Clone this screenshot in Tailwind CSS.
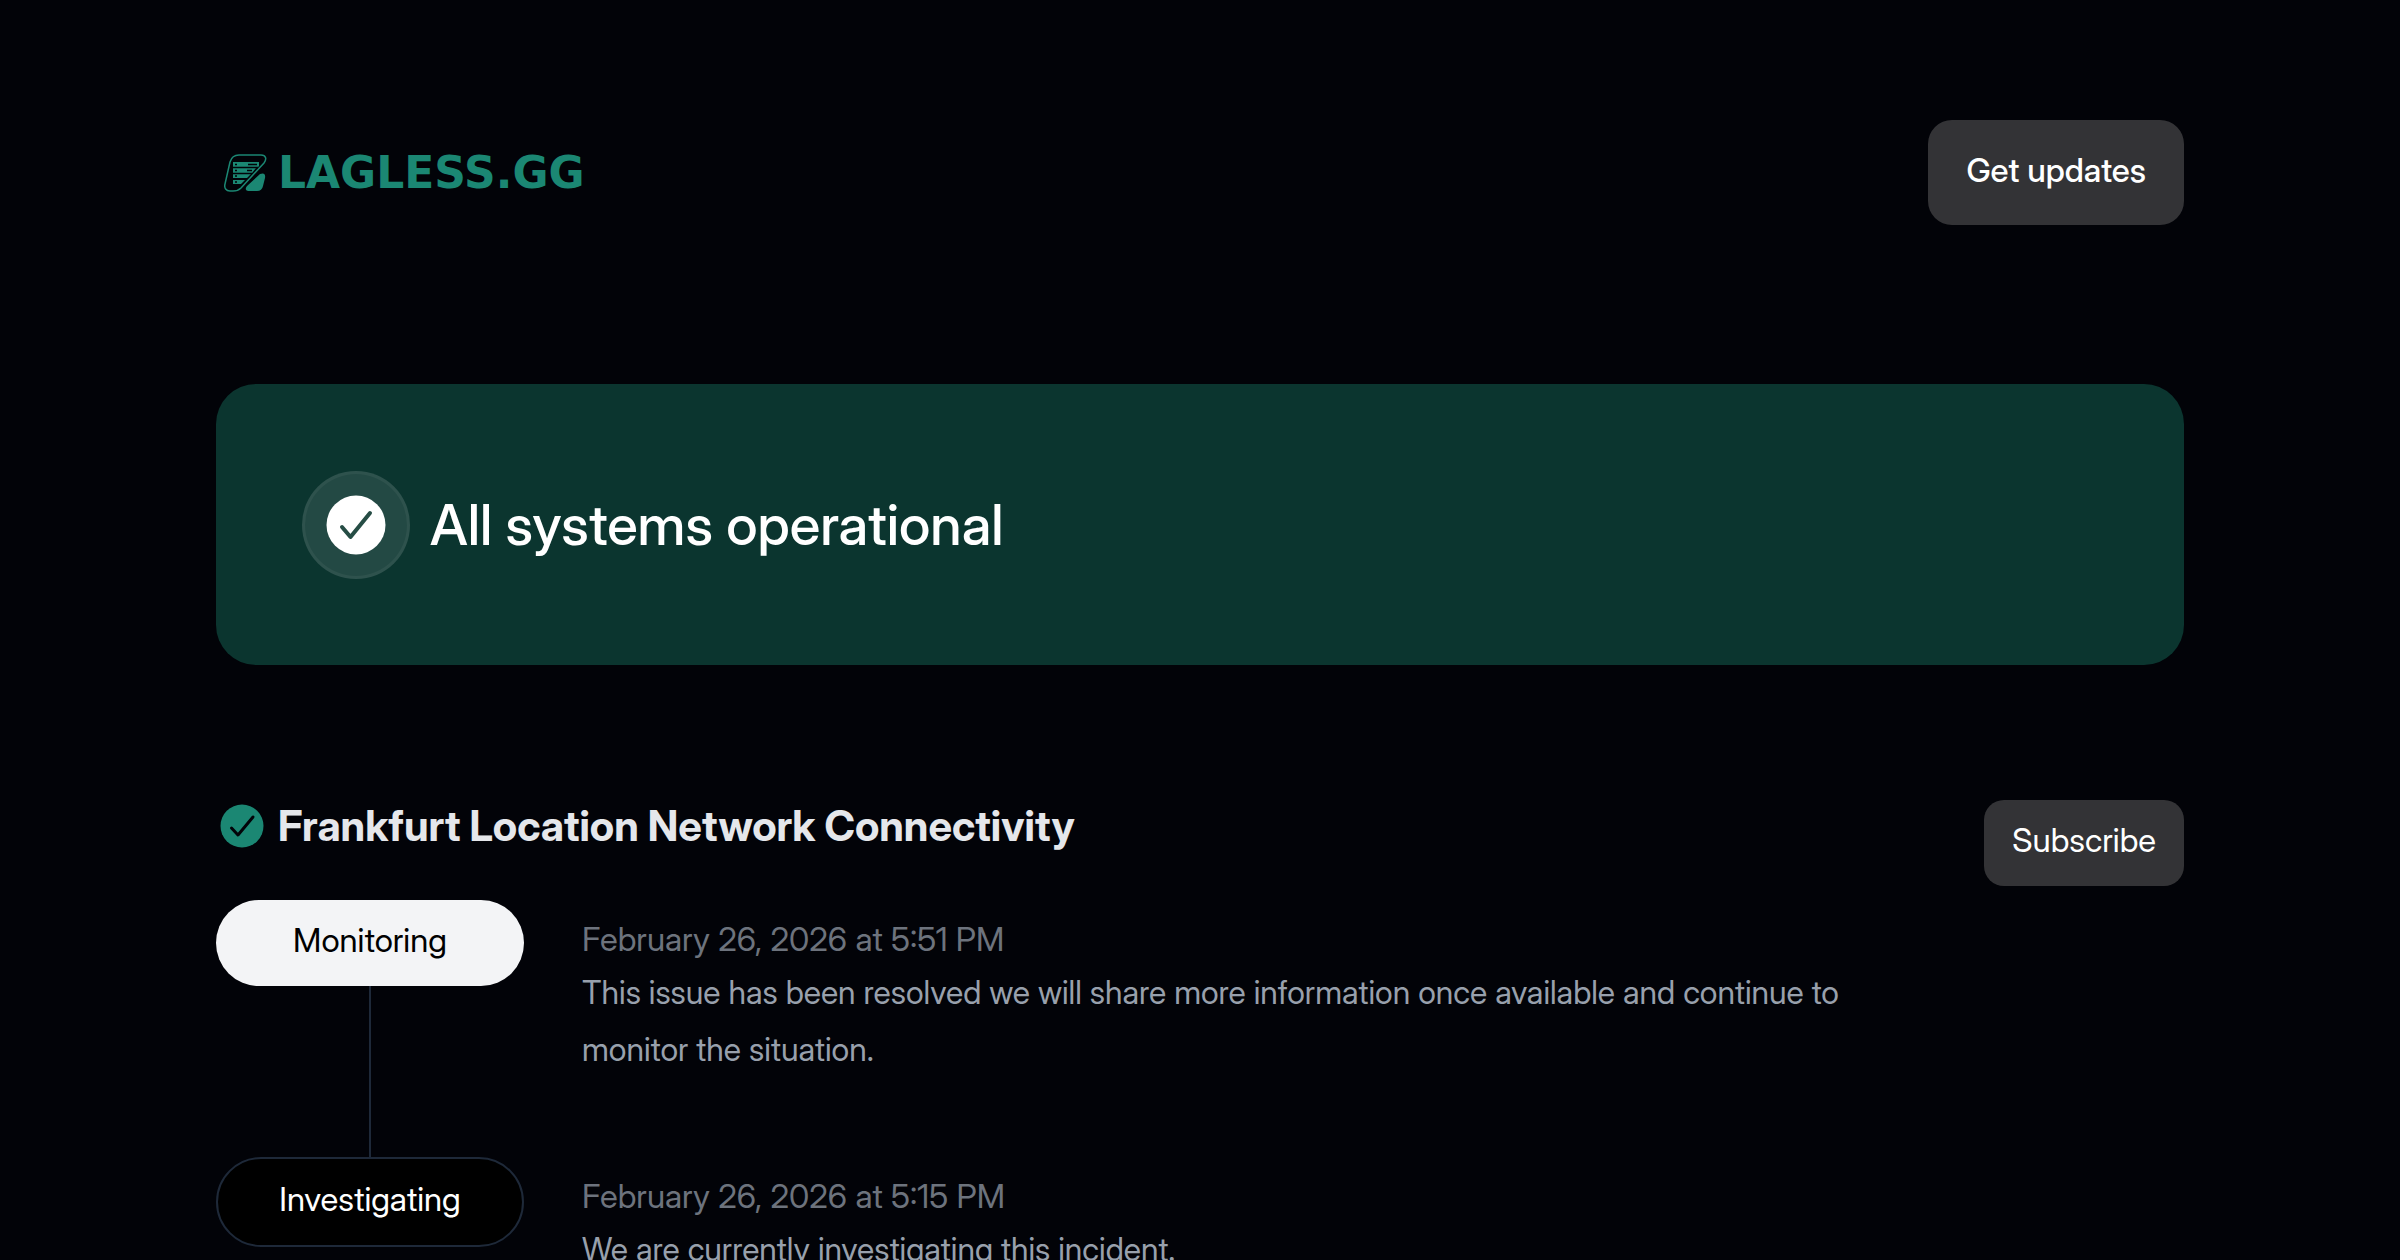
<!DOCTYPE html>
<html lang="en">
<head>
    <meta charset="UTF-8">
    <meta name="viewport" content="width=device-width, initial-scale=1.0">
    <title>LAGLESS.GG Status</title>
    <script src="https://cdn.jsdelivr.net/npm/@tailwindcss/browser@4"></script>
</head>
<body class="bg-[#020308] min-h-screen overflow-hidden font-['Inter_Display','Inter',sans-serif] text-[33px] text-white">
    <div class="max-w-[2048px] mx-auto px-10 pt-30">
        <!-- Header -->
        <header class="flex justify-between items-center">
            <a href="#" class="flex items-center gap-2.5 pl-2 text-[#1b8773]">
                <svg class="w-11 h-10" viewBox="0 0 44 40" fill="none">
                    <path d="M15 2H37C42 2 43 6 40 10L17 35Q14 38 9 38H6C2 38 0 35 1 31L6 9Q8 2 15 2Z" stroke="currentColor" stroke-width="1.500"/>
                    <path d="M9 9H35V13L34 14H9ZM9 15H32L28 20H9ZM9 21H27L23 25H9ZM9 27H21L17 31H9Z" fill="currentColor"/>
                    <path d="M9 14.500H34M9 20.500H28M9 26H23" stroke="#020308" stroke-width="1.500"/>
                    <path d="M11 11.500H13M11 17.500H13M11 23H13M11 29H13M24 11.500H33M23 17.500H28" stroke="#020308" stroke-width="1.500"/>
                    <path d="M36 21Q42 19 41 25L39 33Q38 38 33 38H24Q20 37 23 33Z" fill="currentColor"/>
                </svg>
                <span class="font-['DejaVu_Sans',sans-serif] font-bold text-[44px] leading-none">LAGLESS.GG</span>
            </a>
            <button class="bg-[#333336] rounded-3xl h-[105px] px-[38px] pb-1 font-medium">Get updates</button>
        </header>

        <main>
            <!-- Overall status -->
            <section class="mt-[159px] h-[281px] rounded-[40px] bg-[#0b352f] px-[86px] flex items-center gap-5">
                <div class="size-[108px] rounded-full bg-white/10 border-3 border-white/5 flex items-center justify-center">
                    <svg class="size-[60px]" viewBox="0 0 60 60" fill="none">
                        <circle cx="30" cy="30" r="29.500" fill="white"/>
                        <path d="M16 32L24.500 42L44 18" stroke="#264d45" stroke-width="4" stroke-linecap="round" stroke-linejoin="round"/>
                    </svg>
                </div>
                <h1 class="text-[56px] font-medium">All systems operational</h1>
            </section>

            <!-- Incident -->
            <section class="mt-[135px]">
                <div class="flex justify-between items-start">
                    <div class="flex items-center gap-3.5 pl-1">
                        <svg class="size-11" viewBox="0 0 44 44" fill="none">
                            <circle cx="22" cy="22" r="21.500" fill="#1b8773"/>
                            <path d="M11.500 24L18 31L33 13" stroke="#020308" stroke-width="3" stroke-linecap="round" stroke-linejoin="round"/>
                        </svg>
                        <h2 class="text-[42px] leading-[52px] font-bold text-gray-200">Frankfurt Location Network Connectivity</h2>
                    </div>
                    <button class="bg-[#333336] rounded-[20px] h-[86px] px-7 pb-1">Subscribe</button>
                </div>

                <ol class="mt-[14px]">
                    <li class="flex gap-[58px]">
                        <div class="w-[308px] shrink-0 flex flex-col items-center">
                            <span class="w-full h-[86px] pb-1 rounded-full bg-gray-100 text-black flex items-center justify-center">Monitoring</span>
                            <span class="w-0.5 grow bg-gray-800"></span>
                        </div>
                        <div class="max-w-[1320px] pt-3.5 pb-[79px]">
                            <time class="block leading-[50px] text-[#6d737d]">February 26, 2026 at 5:51 PM</time>
                            <p class="text-[32px] leading-[57px] text-[#98a0ac]">This issue has been resolved we will share more information once available and continue to monitor the situation.</p>
                        </div>
                    </li>
                    <li class="flex gap-[58px]">
                        <div class="w-[308px] shrink-0">
                            <span class="h-[90px] pb-1 rounded-full bg-black border-2 border-gray-800 flex items-center justify-center">Investigating</span>
                        </div>
                        <div class="max-w-[1320px] pt-3.5">
                            <time class="block leading-[50px] text-[#6d737d]">February 26, 2026 at 5:15 PM</time>
                            <p class="text-[32px] leading-[57px] text-[#98a0ac]">We are currently investigating this incident.</p>
                        </div>
                    </li>
                </ol>
            </section>
        </main>
    </div>
</body>
</html>
